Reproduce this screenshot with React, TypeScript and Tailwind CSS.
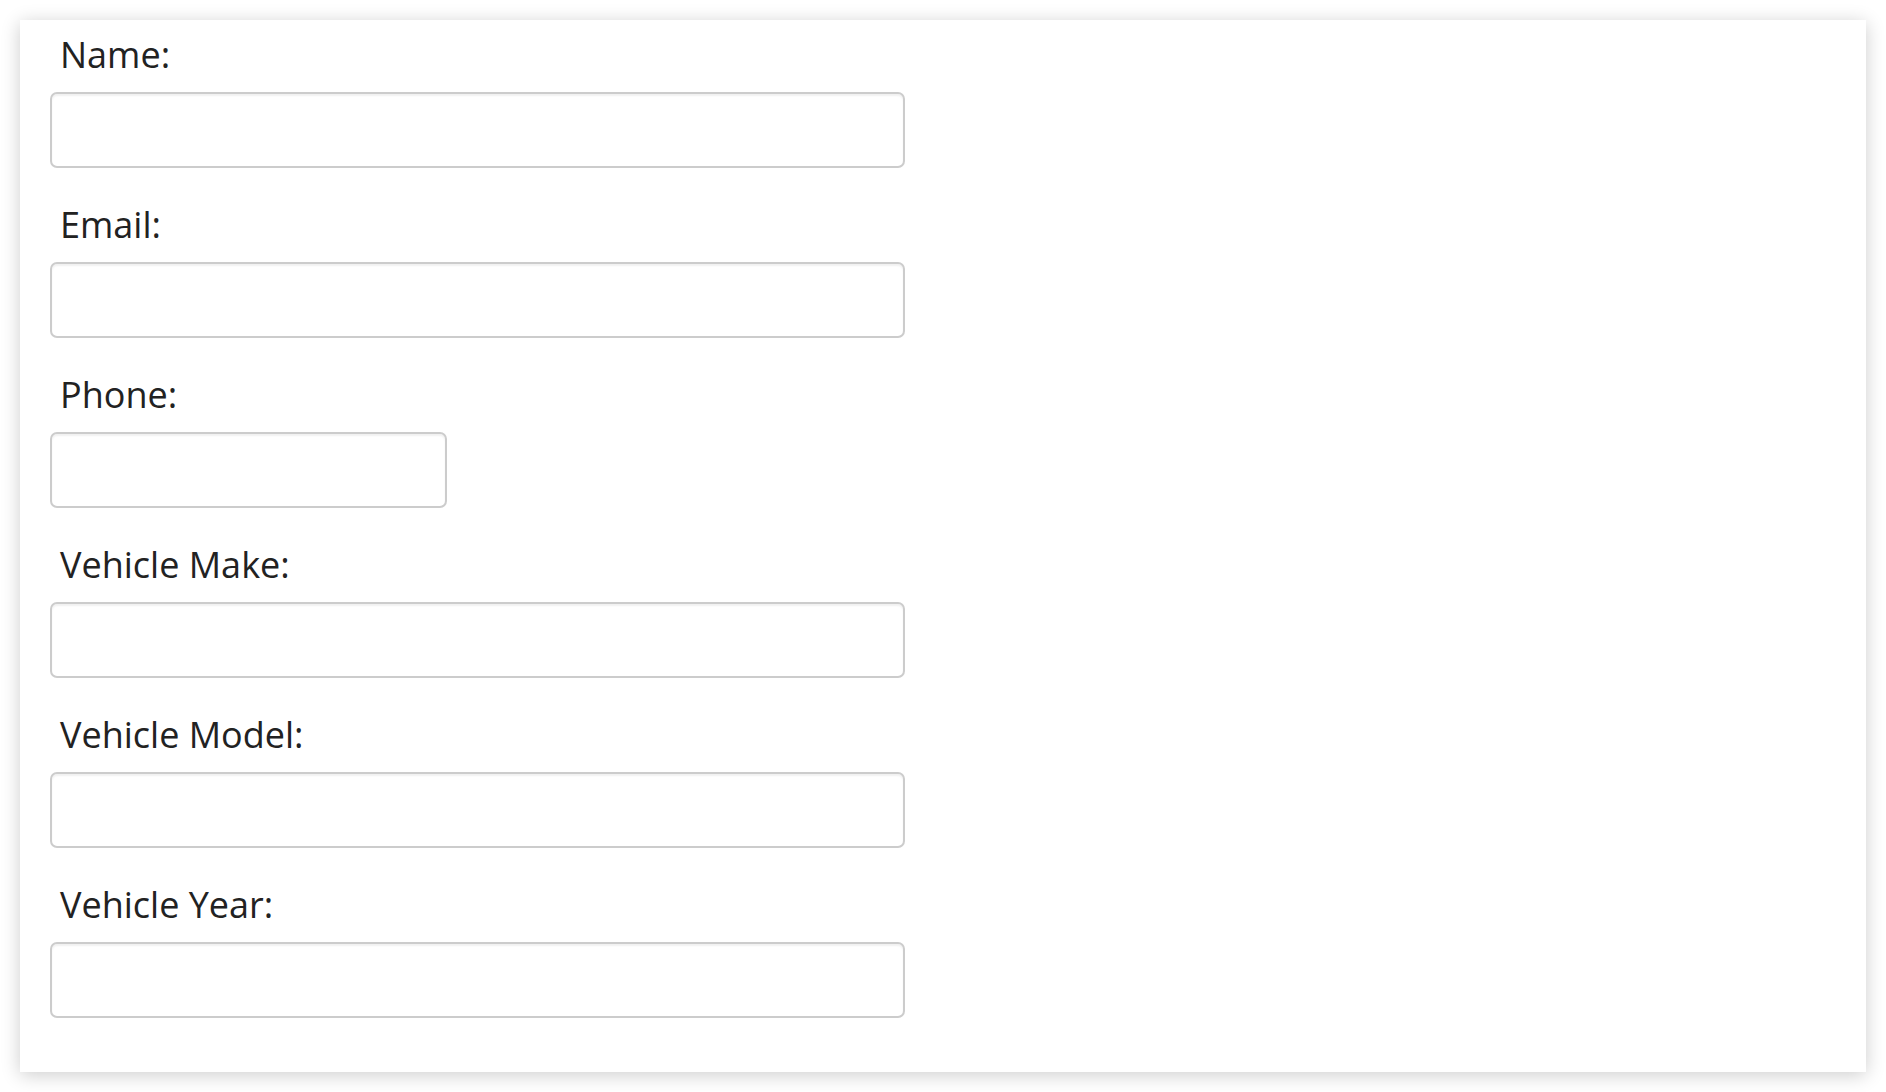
import React from "react";

const fields = [
  { label: "Name:", w: "w-[855px]" },
  { label: "Email:", w: "w-[855px]" },
  { label: "Phone:", w: "w-[397px]" },
  { label: "Vehicle Make:", w: "w-[855px]" },
  { label: "Vehicle Model:", w: "w-[855px]" },
  { label: "Vehicle Year:", w: "w-[855px]" },
];

export default function App() {
  return (
    <div className="w-[1886px] h-[1092px] bg-white p-[20px] font-['Open_Sans',sans-serif]">
      <div className="w-[1846px] h-[1052px] bg-white shadow-[0_3px_18px_rgba(0,0,0,0.2)] pt-[10px] pl-[30px] flex flex-col gap-[32px]">
        {fields.map((f) => (
          <div key={f.label} className="flex flex-col gap-[13px]">
            <label className="pl-[10px] text-[36px] leading-[49px] text-[#222]">{f.label}</label>
            <input
              type="text"
              className={`${f.w} h-[76px] border-2 border-[#ccc] rounded-[7px] bg-white shadow-[inset_0_2px_2px_rgba(0,0,0,0.06)] outline-none`}
            />
          </div>
        ))}
      </div>
    </div>
  );
}
